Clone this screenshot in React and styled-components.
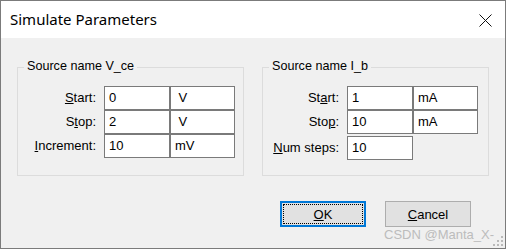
import React from "react";
import styled, { createGlobalStyle } from "styled-components";

const Global = createGlobalStyle`
  html, body { margin: 0; padding: 0; background: #ffffff; }
  body { font-family: "Liberation Sans", Arial, sans-serif; }
  * { box-sizing: border-box; }
`;

const Window = styled.div`
  position: relative;
  width: 506px;
  height: 249px;
  border: 1px solid #7b7b7b;
  background: #f0f0f0;
  display: flex;
  flex-direction: column;
  color: #000;
`;

const TitleBar = styled.div`
  height: 37px;
  flex: none;
  background: #ffffff;
  display: flex;
  align-items: center;
  justify-content: space-between;
  padding: 0 13px 0 9px;
`;

const Title = styled.div`
  font-family: "Noto Sans", "Open Sans", sans-serif;
  font-size: 15px;
  line-height: 37px;
  color: #000;
`;

const CloseIcon = styled.svg`
  display: block;
  width: 13px;
  height: 13px;
  margin-top: 1px;
`;

const Body = styled.div`
  flex: 1;
  padding: 29px 16px 0 16px;
  font-family: "Liberation Sans", Arial, sans-serif;
  font-size: 13px;
`;

const Groups = styled.div`
  display: flex;
  gap: 18px;
`;

const Group = styled.div`
  position: relative;
  width: 227px;
  height: 109px;
  border: 1px solid #dcdcdc;
  padding: 18px 0 0 10px;
`;

const Legend = styled.div`
  position: absolute;
  top: -9px;
  left: 6px;
  padding: 0 3px;
  background: #f0f0f0;
  font-size: 12.6px;
  line-height: 15px;
  white-space: nowrap;
`;

const Row = styled.div`
  display: flex;
  align-items: center;
  height: 24px;
  margin-top: ${(p) => p.$gap || 0}px;
`;

const Label = styled.div`
  width: ${(p) => p.$w}px;
  margin-right: 8px;
  text-align: right;
  line-height: 24px;
  white-space: nowrap;
`;

const Field = styled.div`
  width: ${(p) => p.$w}px;
  height: 24px;
  border: 1px solid #7a7a7a;
  background: #ffffff;
  padding-left: 4px;
  line-height: 22px;
  white-space: nowrap;
`;

const Buttons = styled.div`
  display: flex;
  justify-content: flex-end;
  gap: 19px;
  margin-top: 25px;
  padding-right: 18px;
`;

const Button = styled.div`
  width: 86px;
  height: 26px;
  display: flex;
  align-items: center;
  justify-content: center;
  background: #e1e1e1;
  border: ${(p) => (p.$focus ? "2px solid #0078d7" : "1px solid #adadad")};
  outline: ${(p) => (p.$focus ? "1px dotted #000" : "none")};
  outline-offset: -4px;
  font-size: 13px;
  line-height: 1;
`;

const Watermark = styled.div`
  position: absolute;
  left: 383px;
  top: 226px;
  font-family: "Liberation Sans", Arial, sans-serif;
  font-size: 13px;
  line-height: 15px;
  color: #bcbcbc;
  white-space: nowrap;
`;

const Grip = styled.svg`
  position: absolute;
  right: 1px;
  bottom: 1px;
  width: 12px;
  height: 12px;
`;

export default function App() {
  return (
    <>
      <Global />
      <Window>
        <TitleBar>
          <Title>Simulate Parameters</Title>
          <CloseIcon viewBox="0 0 13 13">
            <path d="M0.5 0.5 L12.5 12.5 M12.5 0.5 L0.5 12.5" stroke="#111" strokeWidth="1" fill="none" />
          </CloseIcon>
        </TitleBar>
        <Body>
          <Groups>
            <Group>
              <Legend>Source name V_ce</Legend>
              <Row>
                <Label $w={68}><u>S</u>tart:</Label>
                <Field $w={66}>0</Field>
                <Field $w={65}>{"\u00a0V"}</Field>
              </Row>
              <Row>
                <Label $w={68}>S<u>t</u>op:</Label>
                <Field $w={66}>2</Field>
                <Field $w={65}>{"\u00a0V"}</Field>
              </Row>
              <Row>
                <Label $w={68}><u>I</u>ncrement:</Label>
                <Field $w={66}>10</Field>
                <Field $w={65}>mV</Field>
              </Row>
            </Group>
            <Group>
              <Legend>Source name I_b</Legend>
              <Row>
                <Label $w={66}>St<u>a</u>rt:</Label>
                <Field $w={66}>1</Field>
                <Field $w={65}>mA</Field>
              </Row>
              <Row>
                <Label $w={66}>Sto<u>p</u>:</Label>
                <Field $w={66}>10</Field>
                <Field $w={65}>mA</Field>
              </Row>
              <Row $gap={2}>
                <Label $w={66}><u>N</u>um steps:</Label>
                <Field $w={66}>10</Field>
              </Row>
            </Group>
          </Groups>
          <Buttons>
            <Button $focus><span><u>O</u>K</span></Button>
            <Button><span><u>C</u>ancel</span></Button>
          </Buttons>
        </Body>
        <Watermark>CSDN @Manta_X-</Watermark>
        <Grip viewBox="0 0 12 12">
          <rect x="9" y="1" width="2" height="2" fill="#b9b9b9" />
          <rect x="5" y="5" width="2" height="2" fill="#b9b9b9" />
          <rect x="9" y="5" width="2" height="2" fill="#b9b9b9" />
          <rect x="1" y="9" width="2" height="2" fill="#b9b9b9" />
          <rect x="5" y="9" width="2" height="2" fill="#b9b9b9" />
          <rect x="9" y="9" width="2" height="2" fill="#b9b9b9" />
        </Grip>
      </Window>
    </>
  );
}
